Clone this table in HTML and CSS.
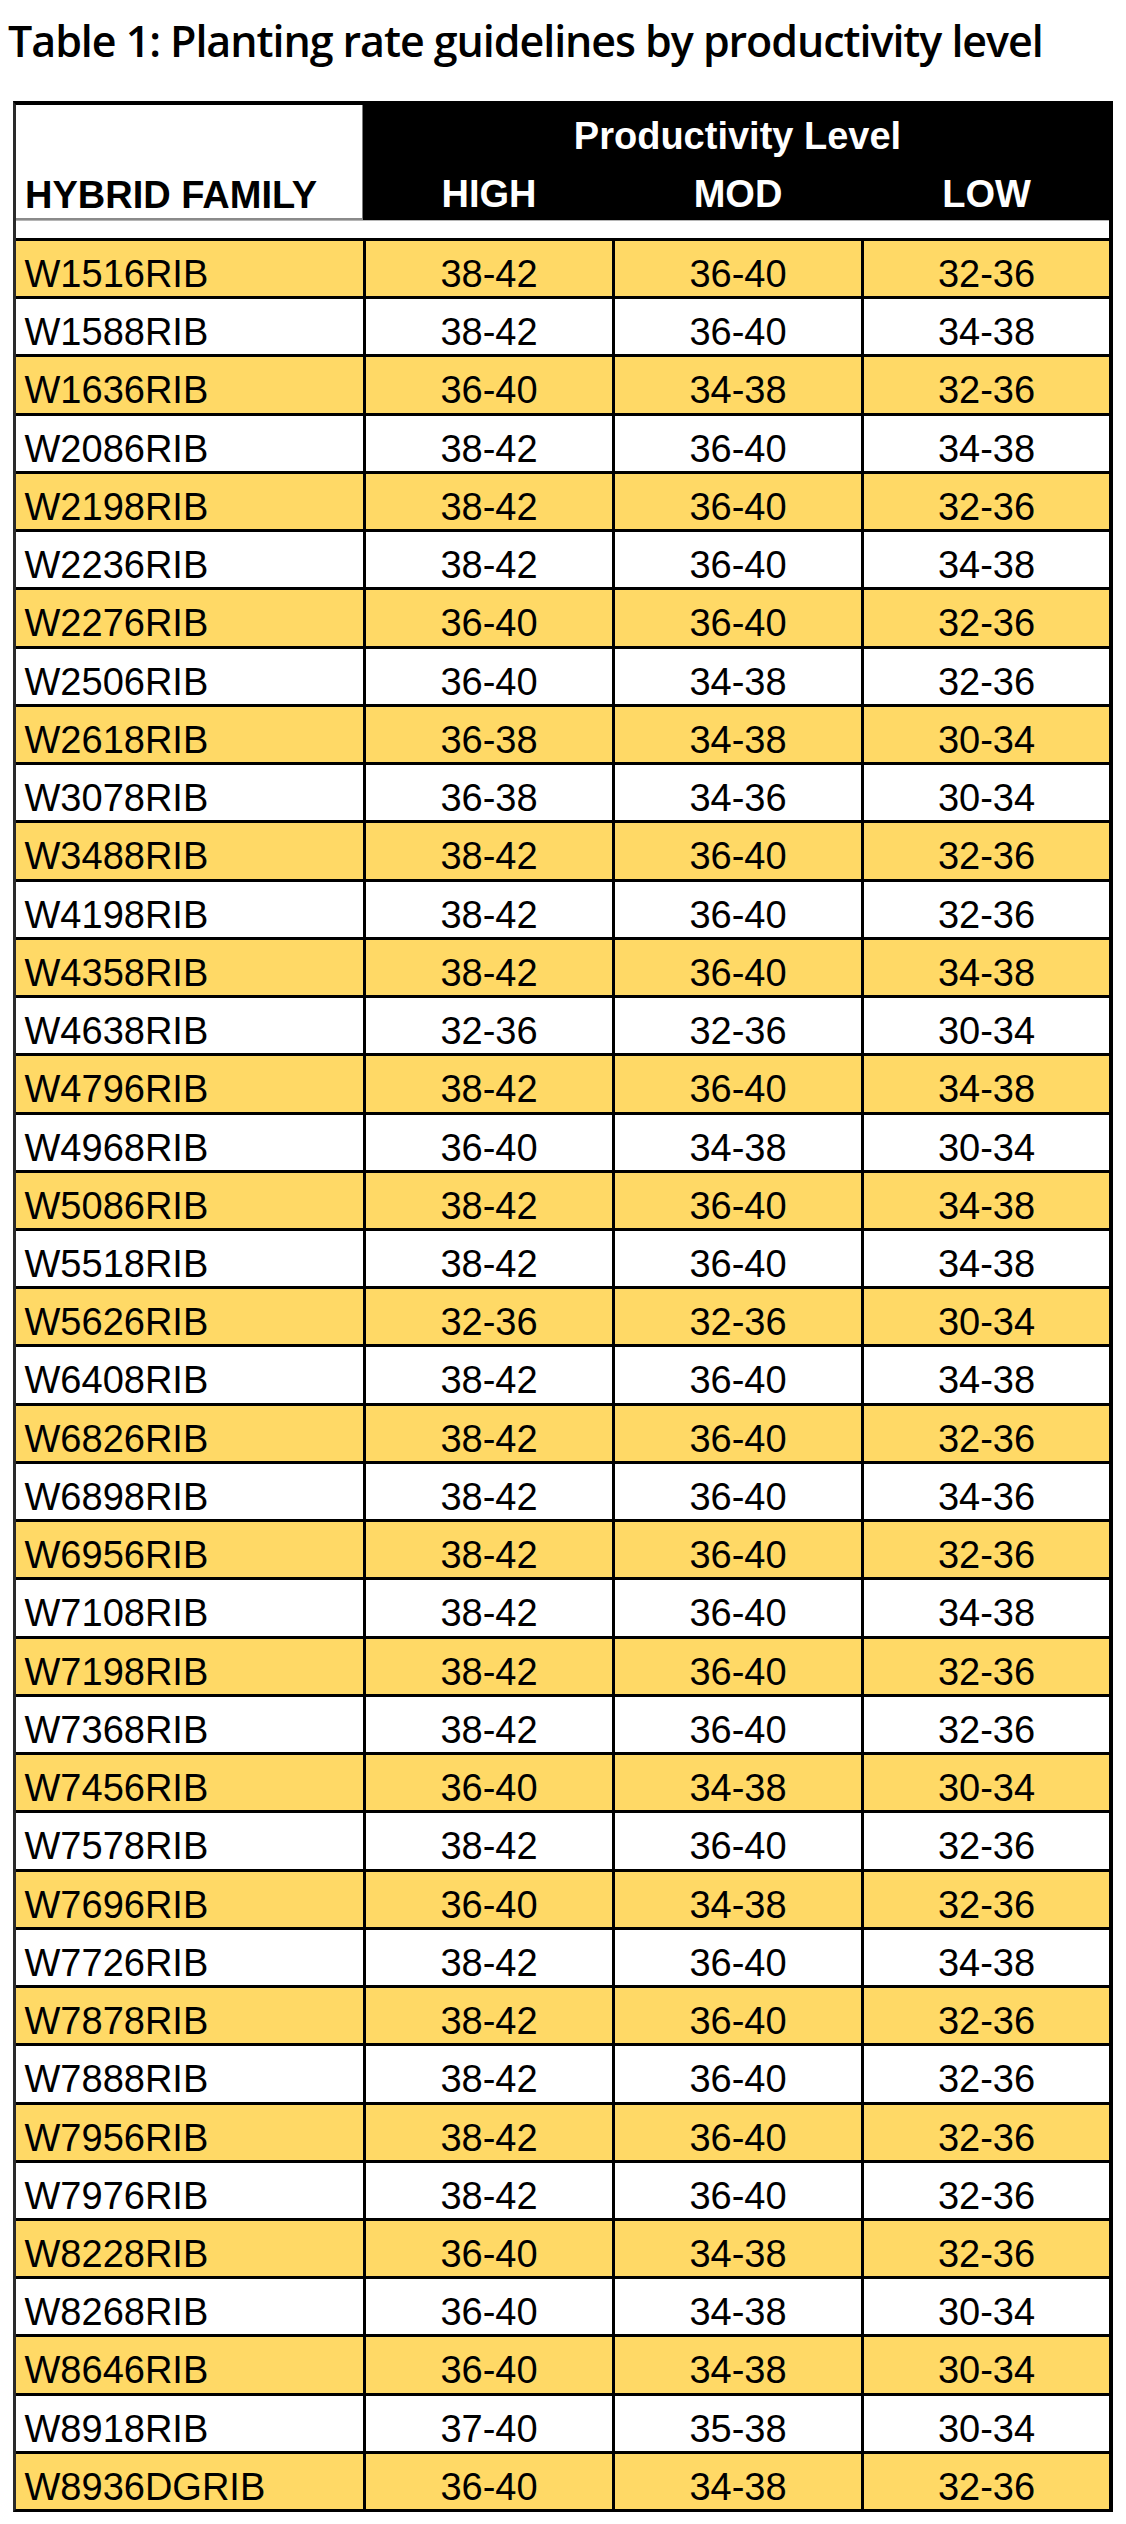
FILE: index.html
```html
<!DOCTYPE html>
<html lang="en">
<head>
<meta charset="utf-8">
<title>Table 1: Planting rate guidelines by productivity level</title>
<link rel="stylesheet" href="styles.css">
</head>
<body>
<h1 class="title">Table 1: Planting rate guidelines by productivity level</h1>
<div class="tbl">
  <div class="head">
    <div class="head-family">HYBRID FAMILY</div>
    <div class="head-prod">
      <div class="prod-title">Productivity Level</div>
      <div class="prod-sub">HIGH</div>
      <div class="prod-sub">MOD</div>
      <div class="prod-sub">LOW</div>
    </div>
  </div>
  <div class="spacer"></div>
  <div class="rows">
    <div class="row y"><div class="c name">W1516RIB</div><div class="c">38-42</div><div class="c">36-40</div><div class="c">32-36</div></div>
    <div class="row"><div class="c name">W1588RIB</div><div class="c">38-42</div><div class="c">36-40</div><div class="c">34-38</div></div>
    <div class="row y"><div class="c name">W1636RIB</div><div class="c">36-40</div><div class="c">34-38</div><div class="c">32-36</div></div>
    <div class="row"><div class="c name">W2086RIB</div><div class="c">38-42</div><div class="c">36-40</div><div class="c">34-38</div></div>
    <div class="row y"><div class="c name">W2198RIB</div><div class="c">38-42</div><div class="c">36-40</div><div class="c">32-36</div></div>
    <div class="row"><div class="c name">W2236RIB</div><div class="c">38-42</div><div class="c">36-40</div><div class="c">34-38</div></div>
    <div class="row y"><div class="c name">W2276RIB</div><div class="c">36-40</div><div class="c">36-40</div><div class="c">32-36</div></div>
    <div class="row"><div class="c name">W2506RIB</div><div class="c">36-40</div><div class="c">34-38</div><div class="c">32-36</div></div>
    <div class="row y"><div class="c name">W2618RIB</div><div class="c">36-38</div><div class="c">34-38</div><div class="c">30-34</div></div>
    <div class="row"><div class="c name">W3078RIB</div><div class="c">36-38</div><div class="c">34-36</div><div class="c">30-34</div></div>
    <div class="row y"><div class="c name">W3488RIB</div><div class="c">38-42</div><div class="c">36-40</div><div class="c">32-36</div></div>
    <div class="row"><div class="c name">W4198RIB</div><div class="c">38-42</div><div class="c">36-40</div><div class="c">32-36</div></div>
    <div class="row y"><div class="c name">W4358RIB</div><div class="c">38-42</div><div class="c">36-40</div><div class="c">34-38</div></div>
    <div class="row"><div class="c name">W4638RIB</div><div class="c">32-36</div><div class="c">32-36</div><div class="c">30-34</div></div>
    <div class="row y"><div class="c name">W4796RIB</div><div class="c">38-42</div><div class="c">36-40</div><div class="c">34-38</div></div>
    <div class="row"><div class="c name">W4968RIB</div><div class="c">36-40</div><div class="c">34-38</div><div class="c">30-34</div></div>
    <div class="row y"><div class="c name">W5086RIB</div><div class="c">38-42</div><div class="c">36-40</div><div class="c">34-38</div></div>
    <div class="row"><div class="c name">W5518RIB</div><div class="c">38-42</div><div class="c">36-40</div><div class="c">34-38</div></div>
    <div class="row y"><div class="c name">W5626RIB</div><div class="c">32-36</div><div class="c">32-36</div><div class="c">30-34</div></div>
    <div class="row"><div class="c name">W6408RIB</div><div class="c">38-42</div><div class="c">36-40</div><div class="c">34-38</div></div>
    <div class="row y"><div class="c name">W6826RIB</div><div class="c">38-42</div><div class="c">36-40</div><div class="c">32-36</div></div>
    <div class="row"><div class="c name">W6898RIB</div><div class="c">38-42</div><div class="c">36-40</div><div class="c">34-36</div></div>
    <div class="row y"><div class="c name">W6956RIB</div><div class="c">38-42</div><div class="c">36-40</div><div class="c">32-36</div></div>
    <div class="row"><div class="c name">W7108RIB</div><div class="c">38-42</div><div class="c">36-40</div><div class="c">34-38</div></div>
    <div class="row y"><div class="c name">W7198RIB</div><div class="c">38-42</div><div class="c">36-40</div><div class="c">32-36</div></div>
    <div class="row"><div class="c name">W7368RIB</div><div class="c">38-42</div><div class="c">36-40</div><div class="c">32-36</div></div>
    <div class="row y"><div class="c name">W7456RIB</div><div class="c">36-40</div><div class="c">34-38</div><div class="c">30-34</div></div>
    <div class="row"><div class="c name">W7578RIB</div><div class="c">38-42</div><div class="c">36-40</div><div class="c">32-36</div></div>
    <div class="row y"><div class="c name">W7696RIB</div><div class="c">36-40</div><div class="c">34-38</div><div class="c">32-36</div></div>
    <div class="row"><div class="c name">W7726RIB</div><div class="c">38-42</div><div class="c">36-40</div><div class="c">34-38</div></div>
    <div class="row y"><div class="c name">W7878RIB</div><div class="c">38-42</div><div class="c">36-40</div><div class="c">32-36</div></div>
    <div class="row"><div class="c name">W7888RIB</div><div class="c">38-42</div><div class="c">36-40</div><div class="c">32-36</div></div>
    <div class="row y"><div class="c name">W7956RIB</div><div class="c">38-42</div><div class="c">36-40</div><div class="c">32-36</div></div>
    <div class="row"><div class="c name">W7976RIB</div><div class="c">38-42</div><div class="c">36-40</div><div class="c">32-36</div></div>
    <div class="row y"><div class="c name">W8228RIB</div><div class="c">36-40</div><div class="c">34-38</div><div class="c">32-36</div></div>
    <div class="row"><div class="c name">W8268RIB</div><div class="c">36-40</div><div class="c">34-38</div><div class="c">30-34</div></div>
    <div class="row y"><div class="c name">W8646RIB</div><div class="c">36-40</div><div class="c">34-38</div><div class="c">30-34</div></div>
    <div class="row"><div class="c name">W8918RIB</div><div class="c">37-40</div><div class="c">35-38</div><div class="c">30-34</div></div>
    <div class="row y"><div class="c name">W8936DGRIB</div><div class="c">36-40</div><div class="c">34-38</div><div class="c">32-36</div></div>
  </div>
</div>
</body>
</html>
```

FILE: styles.css
```css
* { box-sizing: border-box; }

html, body {
  margin: 0;
  padding: 0;
  background: #ffffff;
}

body {
  font-family: "Liberation Sans", Arial, sans-serif;
  color: #000;
}

.title {
  margin: 0;
  padding: 18.5px 0 0 8px;
  font-family: "Open Sans", "Noto Sans", sans-serif;
  font-weight: 600;
  font-size: 43px;
  line-height: 43px;
  letter-spacing: -1.05px;
  white-space: nowrap;
  color: #000;
}

.tbl {
  margin: 39.5px 0 0 13px;
  width: 1100px;
  border-style: solid;
  border-color: #000;
  border-left-color: #2a2a2a;
  border-width: 4px 4px 3px 3px;
}

.head {
  display: grid;
  grid-template-columns: 347px 1fr;
  height: 115px;
}

.head-family {
  background: #fff;
  border-right: 1px solid #7a7a7a;
  border-bottom: 2px solid #8a8a8a;
  padding: 70.5px 0 0 9px;
  font-weight: 700;
  font-size: 38px;
  line-height: 38px;
  white-space: nowrap;
}

.head-prod {
  background: #000;
  color: #fff;
  font-weight: 700;
  font-size: 38px;
  line-height: 38px;
  display: grid;
  grid-template-columns: 246px 246px 245px;
  column-gap: 3px;
  padding: 12px 0 0 3px;
  row-gap: 20px;
  align-content: start;
}

.prod-title {
  grid-column: 1 / -1;
  text-align: center;
}

.prod-sub {
  text-align: center;
}

.spacer {
  height: 18px;
  background: #fff;
  border-top: 1px solid #b5b5b5;
}

.rows {
  display: grid;
  grid-template-columns: 347px 246px 246px 245px;
  grid-auto-rows: 55.24px;
  gap: 3px;
  background: #000;
  border-top: 3px solid #000;
}

.row {
  display: contents;
}

.c {
  background: #fff;
  font-size: 38px;
  line-height: 38px;
  padding-top: 14px;
  text-align: center;
  white-space: nowrap;
}

.row.y .c {
  background: #ffd966;
}

.c.name {
  text-align: left;
  padding-left: 8.5px;
}
```
